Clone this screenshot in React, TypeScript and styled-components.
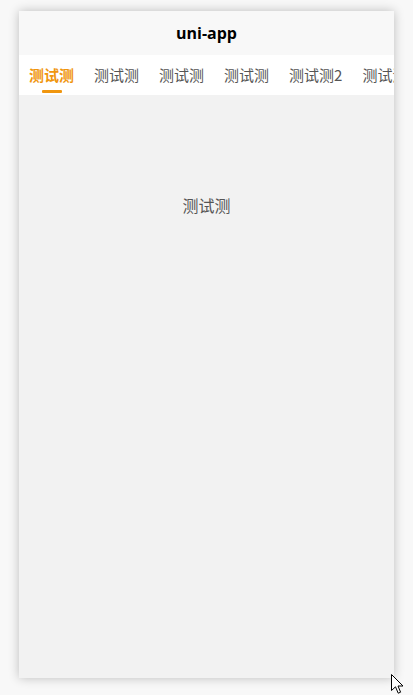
import React, { useState } from "react";
import styled, { createGlobalStyle } from "styled-components";

const Global = createGlobalStyle`
  html, body { margin: 0; padding: 0; background: #f8f8f8; }
  body { font-family: "Noto Sans", "Noto Sans CJK SC", sans-serif; overflow: hidden; }
  * { box-sizing: border-box; }
`;

const Page = styled.div`
  width: 413px;
  height: 695px;
  padding: 11px 19px 0 19px;
  position: relative;
  background: #f8f8f8;
`;

const Device = styled.div`
  width: 375px;
  height: 667px;
  display: flex;
  flex-direction: column;
  background: #f2f2f2;
  box-shadow: 0 0 10px rgba(0, 0, 0, 0.24);
  overflow: hidden;
`;

const NavBar = styled.div`
  height: 44px;
  flex: none;
  display: flex;
  align-items: center;
  justify-content: center;
  background: #f8f8f8;
  font-family: "Open Sans", "Noto Sans", sans-serif;
  font-weight: 700;
  font-size: 16px;
  color: #000;
`;

const TabBar = styled.div`
  height: 40px;
  flex: none;
  display: flex;
  background: #fff;
  overflow: hidden;
  white-space: nowrap;
`;

const Tab = styled.div<{ $active?: boolean }>`
  position: relative;
  flex: none;
  padding: 0 10px;
  height: 40px;
  line-height: 40px;
  font-family: "Noto Sans CJK SC", "Noto Sans", sans-serif;
  font-size: 15px;
  color: ${(p) => (p.$active ? "#f0960f" : "#555")};
  font-weight: ${(p) => (p.$active ? 700 : 400)};
`;

const Indicator = styled.span`
  position: absolute;
  left: 50%;
  bottom: 2px;
  width: 20px;
  height: 3px;
  margin-left: -10px;
  background: #f0960f;
  border-radius: 1px;
`;

const Content = styled.div`
  flex: 1;
  display: flex;
  justify-content: center;
  padding-top: 98px;
  font-family: "Noto Sans CJK SC", sans-serif;
  font-size: 16px;
  color: #555;
`;

const Cursor = styled.svg`
  position: absolute;
  left: 391px;
  top: 674px;
`;

const tabs = ["测试测", "测试测", "测试测", "测试测", "测试测2", "测试测", "测试测"];

export default function App() {
  const [active, setActive] = useState(0);
  return (
    <>
      <Global />
      <Page>
        <Device>
          <NavBar>uni-app</NavBar>
          <TabBar>
            {tabs.map((t, i) => (
              <Tab key={i} $active={i === active} onClick={() => setActive(i)}>
                {t}
                {i === active && <Indicator />}
              </Tab>
            ))}
          </TabBar>
          <Content>{tabs[active]}</Content>
        </Device>
        <Cursor width="13" height="21" viewBox="0 0 13 21">
          <path
            d="M0.5 0.5 L0.5 16.5 L4.5 12.8 L7.2 19.2 L9.6 18.2 L7 12 L12 12 Z"
            fill="#fff"
            stroke="#000"
            strokeWidth="1"
            strokeLinejoin="miter"
          />
        </Cursor>
      </Page>
    </>
  );
}
